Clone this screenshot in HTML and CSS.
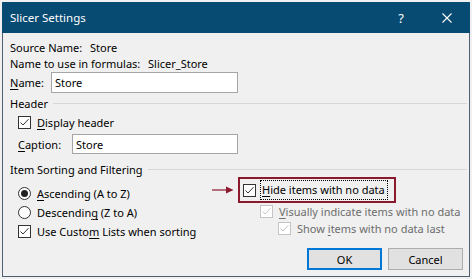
FILE: index.html
```html
<!DOCTYPE html>
<html>
<head>
<meta charset="utf-8">
<link rel="stylesheet" href="styles.css">
</head>
<body>
<div class="window">
  <div class="titlebar">
    <div class="title">Slicer Settings</div>
    <div class="capbtn help">?</div>
    <div class="capbtn close">
      <svg width="10" height="10" viewBox="0 0 10 10"><path d="M0.5 0.5 L9.5 9.5 M9.5 0.5 L0.5 9.5" stroke="#fff" stroke-width="1.1" fill="none"/></svg>
    </div>
  </div>
  <div class="content">
    <div class="row r-source"><span class="lbl w80">Source Name:</span><span>Store</span></div>
    <div class="row r-formula"><span class="lbl w138">Name to use in formulas:</span><span>Slicer_Store</span></div>
    <div class="row r-name"><span class="lbl w41"><u>N</u>ame:</span><div class="textbox tb-name">Store</div></div>
    <div class="group g-header"><span>Header</span><div class="rule"></div></div>
    <div class="row r-display indent">
      <span class="cb"><svg width="13" height="13" viewBox="0 0 13 13"><path d="M2.5 6.5 L5 9 L10.5 3.2" stroke="#333" stroke-width="1" fill="none"/></svg></span>
      <span><u>D</u>isplay header</span>
    </div>
    <div class="row r-caption indent"><span class="lbl w54"><u>C</u>aption:</span><div class="textbox tb-caption">Store</div></div>
    <div class="group g-sort"><span>Item Sorting and Filtering</span><div class="rule"></div></div>
    <div class="lower">
      <div class="leftcol">
        <div class="opt"><span class="radio on"></span><span><u>A</u>scending (A to Z)</span></div>
        <div class="opt"><span class="radio"></span><span>Descendin<u>g</u> (Z to A)</span></div>
        <div class="opt">
          <span class="cb"><svg width="13" height="13" viewBox="0 0 13 13"><path d="M2.5 6.5 L5 9 L10.5 3.2" stroke="#333" stroke-width="1" fill="none"/></svg></span>
          <span>Use Custo<u>m</u> Lists when sorting</span>
        </div>
      </div>
      <div class="rightcol">
        <div class="hide-row">
          <svg class="arrow" width="24" height="10" viewBox="0 0 24 10"><path d="M0 5 H16" stroke="#8b1a2e" stroke-width="1.2"/><path d="M14 1.5 L21.5 5 L14 8.5 Z" fill="#8b1a2e"/></svg>
          <div class="redbox">
            <span class="cb"><svg width="13" height="13" viewBox="0 0 13 13"><path d="M2.5 6.5 L5 9 L10.5 3.2" stroke="#333" stroke-width="1" fill="none"/></svg></span>
            <span class="focus"><u>H</u>ide items with no data</span>
          </div>
        </div>
        <div class="sub sub1">
          <span class="cb dis"><svg width="13" height="13" viewBox="0 0 13 13"><path d="M2.5 6.5 L5 9 L10.5 3.2" stroke="#c4c4c4" stroke-width="1" fill="none"/></svg></span>
          <span class="distext"><u>V</u>isually indicate items with no data</span>
        </div>
        <div class="sub sub2">
          <span class="cb dis"><svg width="13" height="13" viewBox="0 0 13 13"><path d="M2.5 6.5 L5 9 L10.5 3.2" stroke="#c4c4c4" stroke-width="1" fill="none"/></svg></span>
          <span class="distext">Show <u>i</u>tems with no data last</span>
        </div>
      </div>
    </div>
    <div class="buttons">
      <div class="btn default">OK</div>
      <div class="btn">Cancel</div>
    </div>
  </div>
</div>
</body>
</html>
```
FILE: styles.css
```css
html, body {
  margin: 0;
  padding: 0;
  background: #f0f0f0;
}
body {
  padding: 2px 0 0 2px;
  font-family: "Noto Sans", sans-serif;
  font-size: 11px;
  color: #000;
}
.window {
  width: 468px;
  height: 275px;
  box-sizing: border-box;
  border: 1px solid #4d5f70;
  border-top-color: #074a72;
  background: #f0f0f0;
  display: flex;
  flex-direction: column;
}
.titlebar {
  height: 30px;
  background: #074a72;
  display: flex;
  align-items: center;
  color: #fff;
  margin: 0 -1px;
}
.title {
  flex: 1;
  padding-left: 8px;
  font-size: 11.5px;
  line-height: 30px;
}
.capbtn {
  width: 46px;
  height: 30px;
  display: flex;
  align-items: center;
  justify-content: center;
}
.help {
  font-size: 13px;
  margin-right: 0;
}
.content {
  padding: 0 6px 0 7px;
  display: flex;
  flex-direction: column;
}
.row {
  display: flex;
  align-items: center;
  height: 16px;
  white-space: nowrap;
}
.r-source { margin-top: 6px; }
.r-name { height: 21px; margin-top: 1px; }
.r-display { height: 17px; margin-top: 3px; }
.r-caption { height: 20px; margin-top: 3px; }
.indent { padding-left: 8px; }
.lbl { display: inline-block; }
.w80 { width: 80px; }
.w138 { width: 138px; }
.w41 { width: 41px; }
.w54 { width: 54px; }
u { text-decoration-thickness: 1px; text-underline-offset: 2px; }
.textbox {
  box-sizing: border-box;
  height: 100%;
  background: #fff;
  border: 1px solid #a5a5a5;
  padding-left: 3px;
  display: flex;
  align-items: center;
}
.tb-name { width: 187px; }
.tb-caption { width: 166px; }
.group {
  display: flex;
  align-items: center;
  height: 16px;
  white-space: nowrap;
}
.g-header { margin-top: 2px; }
.g-sort { margin-top: 7px; }
.rule {
  flex: 1;
  height: 1px;
  background: #d7d7d7;
  margin-left: 5px;
  margin-right: -4px;
}
.cb {
  width: 13px;
  height: 13px;
  box-sizing: border-box;
  border: 1px solid #333;
  background: #fff;
  margin-right: 6px;
  flex: none;
  position: relative;
}
.cb svg {
  position: absolute;
  left: -1px;
  top: -1px;
}
.cb.dis {
  border-color: #c4c4c4;
  background: #fff;
}
.distext { color: #6d6d6d; }
.radio {
  width: 13px;
  height: 13px;
  box-sizing: border-box;
  border: 1px solid #333;
  border-radius: 50%;
  background: #fff;
  margin-right: 6px;
  flex: none;
  display: flex;
  align-items: center;
  justify-content: center;
}
.radio.on::after {
  content: "";
  width: 7px;
  height: 7px;
  border-radius: 50%;
  background: #222;
}
.lower {
  display: flex;
  height: 64px;
}
.leftcol {
  width: 202px;
  padding-top: 7px;
  padding-left: 8px;
  box-sizing: border-box;
  display: flex;
  flex-direction: column;
}
.opt {
  height: 19px;
  display: flex;
  align-items: center;
  white-space: nowrap;
}
.rightcol {
  display: flex;
  flex-direction: column;
  white-space: nowrap;
}
.hide-row {
  display: flex;
  align-items: center;
  height: 26px;
}
.arrow { margin-right: 2px; flex: none; }
.redbox {
  box-sizing: border-box;
  height: 26px;
  width: 158px;
  border: 2px solid #8b1a2e;
  display: flex;
  align-items: center;
  padding-left: 3px;
}
.redbox .cb { margin-right: 4px; }
.focus {
  outline: 1px dotted #000;
  padding: 1px 2px 2px 1px;
  line-height: 15px;
  margin-left: 1px;
}
.sub {
  height: 17px;
  display: flex;
  align-items: center;
}
.sub1 { padding-left: 48px; }
.sub2 { padding-left: 66px; }
.buttons {
  display: flex;
  justify-content: flex-end;
  gap: 6px;
  margin-top: 7px;
}
.btn {
  width: 75px;
  height: 22px;
  box-sizing: border-box;
  background: #e1e1e1;
  border: 1px solid #adadad;
  display: flex;
  align-items: center;
  justify-content: center;
}
.btn.default {
  border: 2px solid #0078d7;
}
```
